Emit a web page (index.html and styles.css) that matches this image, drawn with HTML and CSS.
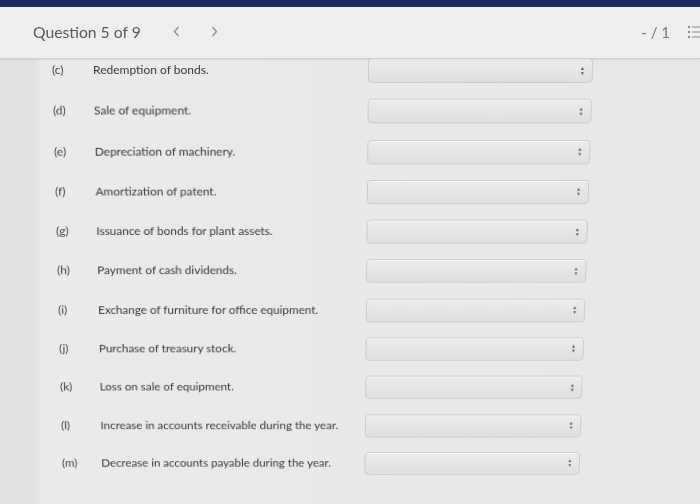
FILE: index.html
```html
<!DOCTYPE html>
<html>
<head>
<meta charset="utf-8">
<link rel="stylesheet" href="styles.css">
</head>
<body>
<div class="topbar"></div>
<header class="header">
  <div class="title">Question 5 of 9</div>
  <div class="nav">
    <svg width="7" height="11" viewBox="0 0 7 11"><path d="M5.5 1 L1.5 5.5 L5.5 10" fill="none" stroke="#8c8c8c" stroke-width="1.3"/></svg>
    <svg width="7" height="11" viewBox="0 0 7 11"><path d="M1.5 1 L5.5 5.5 L1.5 10" fill="none" stroke="#8c8c8c" stroke-width="1.3"/></svg>
  </div>
  <div class="spacer"></div>
  <div class="score">- / 1</div>
  <svg class="menu" width="14" height="14" viewBox="0 0 14 14">
    <g fill="#8a8a8a">
      <rect x="0" y="1" width="2" height="2"/><rect x="4" y="1.5" width="10" height="1"/>
      <rect x="0" y="6" width="2" height="2"/><rect x="4" y="6.5" width="10" height="1"/>
      <rect x="0" y="11" width="2" height="2"/><rect x="4" y="11.5" width="10" height="1"/>
    </g>
  </svg>
</header>
<main class="list">
  <div class="row"><span class="lab">(c)</span><span class="txt">Redemption of bonds.</span><div class="sel"><span class="arr">&#9650;<br>&#9660;</span></div></div>
  <div class="row"><span class="lab">(d)</span><span class="txt">Sale of equipment.</span><div class="sel"><span class="arr">&#9650;<br>&#9660;</span></div></div>
  <div class="row"><span class="lab">(e)</span><span class="txt">Depreciation of machinery.</span><div class="sel"><span class="arr">&#9650;<br>&#9660;</span></div></div>
  <div class="row"><span class="lab">(f)</span><span class="txt">Amortization of patent.</span><div class="sel"><span class="arr">&#9650;<br>&#9660;</span></div></div>
  <div class="row"><span class="lab">(g)</span><span class="txt">Issuance of bonds for plant assets.</span><div class="sel"><span class="arr">&#9650;<br>&#9660;</span></div></div>
  <div class="row"><span class="lab">(h)</span><span class="txt">Payment of cash dividends.</span><div class="sel"><span class="arr">&#9650;<br>&#9660;</span></div></div>
  <div class="row"><span class="lab">(i)</span><span class="txt">Exchange of furniture for office equipment.</span><div class="sel"><span class="arr">&#9650;<br>&#9660;</span></div></div>
  <div class="row"><span class="lab">(j)</span><span class="txt">Purchase of treasury stock.</span><div class="sel"><span class="arr">&#9650;<br>&#9660;</span></div></div>
  <div class="row"><span class="lab">(k)</span><span class="txt">Loss on sale of equipment.</span><div class="sel"><span class="arr">&#9650;<br>&#9660;</span></div></div>
  <div class="row"><span class="lab">(l)</span><span class="txt">Increase in accounts receivable during the year.</span><div class="sel"><span class="arr">&#9650;<br>&#9660;</span></div></div>
  <div class="row"><span class="lab">(m)</span><span class="txt">Decrease in accounts payable during the year.</span><div class="sel"><span class="arr">&#9650;<br>&#9660;</span></div></div>
</main>
</body>
</html>
```

FILE: styles.css
```css
html, body {
  margin: 0;
  padding: 0;
}
body {
  width: 700px;
  height: 504px;
  overflow: hidden;
  background: linear-gradient(90deg, #e2e2e0 0, #e2e2e0 34px, #eaeae8 42px, #e8e8e6 100%);
  font-family: Lato, "Open Sans", sans-serif;
  color: #4a4a4a;
}
.topbar {
  height: 7px;
  background: #1d2b5c;
}
.header {
  position: relative;
  z-index: 2;
  height: 52px;
  display: flex;
  align-items: center;
  padding-bottom: 2px;
  box-sizing: border-box;
  padding-left: 33px;
  background: #eeeeed;
  border-bottom: 1px solid #d0d0ce;
  box-shadow: 0 1px 2px rgba(0,0,0,0.08);
}
.title {
  font-size: 15.7px;
  color: #5a5a5a;
}
.nav {
  display: flex;
  align-items: center;
  gap: 31px;
  margin-left: 32px;
}
.spacer { flex: 1; }
.score {
  font-size: 15px;
  color: #777;
  margin-right: 18px;
}
.menu {
  margin-right: -2px;
}
.list {
  position: relative;
  z-index: 1;
  margin-top: -10px;
  transform-origin: 287px 20.6px;
  transform: perspective(1000px) rotateX(-6.2deg);
}
.row {
  height: 41.28px;
  display: flex;
  align-items: center;
  font-size: 12px;
}
.lab {
  width: 41px;
  margin-left: 52px;
  color: #444;
}
.txt {
  flex: 0 0 275px;
  color: #383838;
}
.sel {
  width: 225px;
  height: 25px;
  margin-top: 2px;
  box-sizing: border-box;
  border: 1px solid #cacac8;
  border-radius: 4px;
  background: linear-gradient(#ececea, #dfdfdd);
  box-shadow: inset 0 1px 0 rgba(255,255,255,0.6);
  display: flex;
  align-items: center;
  justify-content: flex-end;
  padding-right: 7px;
}
.arr {
  font-size: 5px;
  line-height: 5px;
  color: #555;
  text-align: center;
}
```
